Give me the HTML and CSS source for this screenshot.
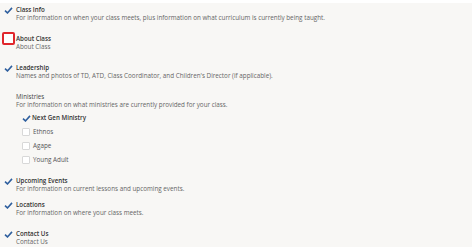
FILE: index.html
```html
<!DOCTYPE html>
<html>
<head>
<meta charset="utf-8">
<link rel="stylesheet" href="styles.css">
</head>
<body>
<div class="panel">
  <div class="item">
    <span class="check"><svg viewBox="0 0 10 8" width="9" height="7"><path d="M1 4.2 L3.8 6.8 L9 1" fill="none" stroke="#2f5f9e" stroke-width="1.8"/></svg></span>
    <div class="text"><div class="title">Class Info</div><div class="desc">For information on when your class meets, plus information on what curriculum is currently being taught.</div></div>
  </div>
  <div class="item">
    <span class="box focus"></span>
    <div class="text"><div class="title">About Class</div><div class="desc">About Class</div></div>
  </div>
  <div class="item">
    <span class="check"><svg viewBox="0 0 10 8" width="9" height="7"><path d="M1 4.2 L3.8 6.8 L9 1" fill="none" stroke="#2f5f9e" stroke-width="1.8"/></svg></span>
    <div class="text"><div class="title">Leadership</div><div class="desc">Names and photos of TD, ATD, Class Coordinator, and Children's Director (if applicable).</div></div>
  </div>
  <div class="item group">
    <div class="text"><div class="title plain">Ministries</div><div class="desc">For information on what ministries are currently provided for your class.</div>
      <div class="sub">
        <div class="subitem"><span class="check"><svg viewBox="0 0 10 8" width="9" height="7"><path d="M1 4.2 L3.8 6.8 L9 1" fill="none" stroke="#2f5f9e" stroke-width="1.8"/></svg></span><span class="title">Next Gen Ministry</span></div>
        <div class="subitem"><span class="box"></span><span class="label">Ethnos</span></div>
        <div class="subitem"><span class="box"></span><span class="label">Agape</span></div>
        <div class="subitem"><span class="box"></span><span class="label">Young Adult</span></div>
      </div>
    </div>
  </div>
  <div class="item tight">
    <span class="check"><svg viewBox="0 0 10 8" width="9" height="7"><path d="M1 4.2 L3.8 6.8 L9 1" fill="none" stroke="#2f5f9e" stroke-width="1.8"/></svg></span>
    <div class="text"><div class="title">Upcoming Events</div><div class="desc">For information on current lessons and upcoming events.</div></div>
  </div>
  <div class="item">
    <span class="check"><svg viewBox="0 0 10 8" width="9" height="7"><path d="M1 4.2 L3.8 6.8 L9 1" fill="none" stroke="#2f5f9e" stroke-width="1.8"/></svg></span>
    <div class="text"><div class="title">Locations</div><div class="desc">For information on where your class meets.</div></div>
  </div>
  <div class="item">
    <span class="check"><svg viewBox="0 0 10 8" width="9" height="7"><path d="M1 4.2 L3.8 6.8 L9 1" fill="none" stroke="#2f5f9e" stroke-width="1.8"/></svg></span>
    <div class="text"><div class="title">Contact Us</div><div class="desc">Contact Us</div></div>
  </div>
</div>
</body>
</html>
```
FILE: styles.css
```css
html, body { margin: 0; padding: 0; background: #ffffff; }
body { font-family: "Open Sans", "Liberation Sans", sans-serif; color: #333; }
.panel {
  margin: 3px 2px 0 0;
  height: 244px;
  background: #f8f7f5;
  overflow: hidden;
  padding: 3px 0 0 4px;
  box-sizing: border-box;
}
.item { display: flex; align-items: flex-start; margin-bottom: 13px; }
.item.tight { margin-bottom: 8px; }
.check { width: 12px; flex: none; display: flex; align-items: center; height: 8px; }
.box {
  width: 6px; height: 6px; flex: none; margin: 0 3px 0 0;
  background: #fff; border: 1px solid #d8d8d8; border-radius: 1px;
}
.box.focus { border: 2px solid #e0262c; border-radius: 2px; width: 9px; height: 9px; margin: -3px 1px 0 -2px; }
.text { display: flex; flex-direction: column; }
.title { font-size: 6.2px; line-height: 8px; font-weight: 600; color: #333; }
.title.plain { font-weight: 400; color: #444; }
.desc { font-size: 6.3px; line-height: 8px; color: #666; white-space: nowrap; }
.group { padding-left: 12px; }
.sub { display: flex; flex-direction: column; gap: 6px; margin-top: 5px; margin-left: 6px; }
.subitem { display: flex; align-items: center; height: 8px; }
.subitem .check { width: 10px; }
.label { font-size: 6.3px; line-height: 8px; color: #555; }
```
